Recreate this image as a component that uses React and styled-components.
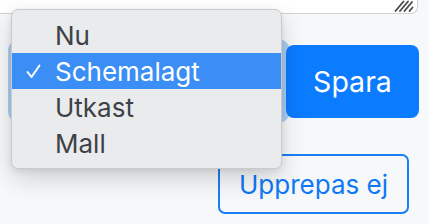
import React from "react";
import styled, { createGlobalStyle } from "styled-components";

const Global = createGlobalStyle`
  html, body { margin: 0; padding: 0; background: #f7f8f9; overflow: hidden; }
  body { font-family: Inter, "Liberation Sans", Arial, sans-serif; }
`;

const Page = styled.div`
  position: relative;
  width: 429px;
  height: 224px;
  overflow: hidden;
  background: #f7f8f9;
`;

const TextArea = styled.div`
  position: relative;
  width: 417px;
  height: 13px;
  background: #fff;
  border: 1px solid #cfd3d7;
  border-top: none;
  border-left: none;
  border-radius: 0 0 7px 0;
`;

const Grip = styled.svg`
  position: absolute;
  right: 3px;
  bottom: 1px;
`;

const FormRow = styled.div`
  display: flex;
  align-items: center;
  padding: 29px 10px 0 12px;
`;

const SelectBox = styled.div`
  position: relative;
  width: 274px;
  height: 76px;
  box-sizing: border-box;
  background: #a9cbf3;
  border-radius: 8px;
  box-shadow: 0 0 0 4px #abcdf3;
`;

const SaveButton = styled.button`
  width: 133px;
  height: 73px;
  margin-left: auto;
  border: none;
  border-radius: 8px;
  background: #0b7bff;
  color: #fff;
  font-family: Inter, "Liberation Sans", Arial, sans-serif;
  font-size: 28.5px;
  padding: 0;
  position: relative;
`;

const SecondRow = styled.div`
  display: flex;
  justify-content: flex-end;
  padding: 35px 20px 0 0;
`;

const OutlineButton = styled.button`
  width: 191px;
  height: 60px;
  box-sizing: border-box;
  border: 2px solid #1a7ef9;
  border-radius: 7px;
  background: transparent;
  color: #0f78f5;
  font-family: Inter, "Liberation Sans", Arial, sans-serif;
  font-size: 26px;
  padding: 0;
`;

const Menu = styled.ul`
  position: absolute;
  left: 11px;
  top: 9px;
  width: 271px;
  height: 160px;
  box-sizing: border-box;
  margin: 0;
  padding: 7px 0 0;
  list-style: none;
  background: #eaebec;
  border: 1px solid #c9cacc;
  border-radius: 7px;
  box-shadow: 0 10px 24px rgba(0, 0, 0, 0.16), 0 2px 6px rgba(0, 0, 0, 0.08);
  z-index: 2;
`;

const Item = styled.li`
  position: relative;
  height: 36px;
  display: flex;
  align-items: center;
  padding-left: 43px;
  font-size: 26px;
  color: ${(p) => (p.$active ? "#ffffff" : "#3d4248")};
  background: ${(p) => (p.$active ? "#3a8ef5" : "transparent")};
`;

const Check = styled.svg`
  position: absolute;
  left: 14px;
  top: 11px;
`;

const items = ["Nu", "Schemalagt", "Utkast", "Mall"];

export default function App() {
  return (
    <Page>
      <Global />
      <TextArea>
        <Grip width="20" height="12" viewBox="0 0 20 12">
          <g stroke="#4a4a4a" strokeWidth="1.8" strokeLinecap="round">
            <line x1="1.5" y1="11" x2="9.5" y2="1.5" />
            <line x1="6" y1="11" x2="14" y2="1.5" />
            <line x1="10.5" y1="11" x2="18" y2="2" />
            <line x1="15.5" y1="11" x2="18.5" y2="7.5" />
          </g>
        </Grip>
      </TextArea>
      <FormRow>
        <SelectBox />
        <SaveButton>Spara</SaveButton>
      </FormRow>
      <SecondRow>
        <OutlineButton>Upprepas ej</OutlineButton>
      </SecondRow>
      <Menu>
        {items.map((t) => (
          <Item key={t} $active={t === "Schemalagt"}>
            {t === "Schemalagt" && (
              <Check width="15" height="15" viewBox="0 0 15 15">
                <path d="M1.5 8 L5.5 13 L13.5 1.5" fill="none" stroke="#fff" strokeWidth="2" strokeLinecap="round" strokeLinejoin="round" />
              </Check>
            )}
            {t}
          </Item>
        ))}
      </Menu>
    </Page>
  );
}
